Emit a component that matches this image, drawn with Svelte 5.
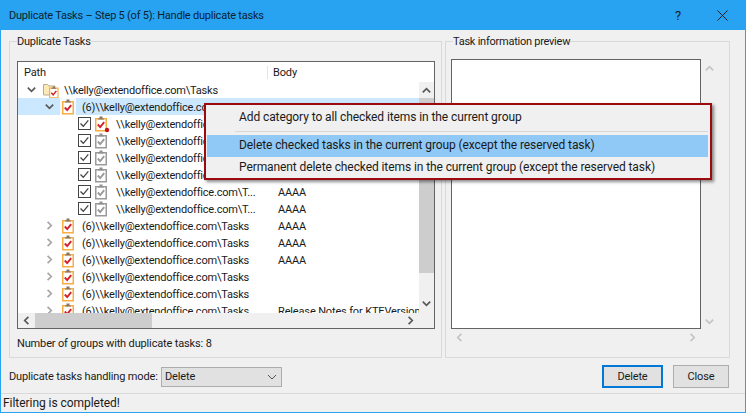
<script>
	const L = '\\\\kelly@extendoffice.com\\Tasks';
	const G = '(6)' + L;
	const C = '\\\\kelly@extendoffice.com\\T...';

	let children = [
		{ text: C, body: '', color: true, dot: true },
		{ text: C, body: '', color: false },
		{ text: C, body: '', color: false },
		{ text: C, body: '', color: false },
		{ text: C, body: 'AAAA', color: false },
		{ text: C, body: 'AAAA', color: false }
	];
	let groups = [
		{ text: G, body: 'AAAA' },
		{ text: G, body: 'AAAA' },
		{ text: G, body: 'AAAA' },
		{ text: G, body: '' },
		{ text: G, body: '' },
		{ text: G, body: 'Release Notes for KTEVersion' }
	];
</script>

{#snippet clip(color)}
	<path d="M0.75 2.75h10.500v12h-10.500z" fill="#fff" stroke={color ? '#f7ae45' : '#9a9a9a'} stroke-width="1.5" />
	<path d="M3 3.500v-1h1.500v-2h3v2h1.500v1z" fill={color ? '#857565' : '#8f8f8f'} />
	<path d="M2.800 8.500l2.400 2.600 4-5" fill="none" stroke={color ? '#d3212a' : '#9a9a9a'} stroke-width="1.9" />
{/snippet}

{#snippet chevDown(color)}
	<svg class="arrow" width="9" height="9" viewBox="0 0 9 9"><path d="M0.800 2.600l3.700 3.700 3.700-3.700" fill="none" stroke={color} stroke-width="1.700" /></svg>
{/snippet}

{#snippet chevRight(color)}
	<svg class="arrow" width="9" height="9" viewBox="0 0 9 9"><path d="M2.600 0.800l3.700 3.700-3.700 3.700" fill="none" stroke={color} stroke-width="1.700" /></svg>
{/snippet}

{#snippet chevUp(color)}
	<svg class="arrow" width="9" height="9" viewBox="0 0 9 9"><path d="M0.800 6.400l3.700-3.700 3.700 3.700" fill="none" stroke={color} stroke-width="1.700" /></svg>
{/snippet}

{#snippet chevLeft(color)}
	<svg class="arrow" width="9" height="9" viewBox="0 0 9 9"><path d="M6.400 0.800l-3.700 3.700 3.700 3.700" fill="none" stroke={color} stroke-width="1.700" /></svg>
{/snippet}

<div class="window">
	<div class="titlebar">
		<span class="title">Duplicate Tasks – Step 5 (of 5): Handle duplicate tasks</span>
		<span class="help">?</span>
		<svg class="close-x" width="11" height="11" viewBox="0 0 11 11"><path d="M0.500 0.500l10 10M10.500 0.500l-10 10" stroke="#1a1a1a" stroke-width="1" fill="none" /></svg>
	</div>

	<div class="content">
		<div class="panels">
			<fieldset class="group left">
				<legend>Duplicate Tasks</legend>
				<div class="tree">
					<div class="tree-main">
						<div class="header">
							<span class="col-path">Path</span>
							<span class="col-body">Body</span>
						</div>
						<div class="rows">
							<div class="row lvl0">
								{@render chevDown('#595959')}
								<svg class="icon" width="16" height="16" viewBox="0 0 16 16">
									<path d="M0.500 2.500h4l1.500 1.500h6v9h-11.500z" fill="#fbeab5" stroke="#b9ad8e" />
									<g transform="translate(6 4) scale(0.8)">{@render clip(true)}</g>
								</svg>
								<span class="txt">{L}</span>
							</div>
							<div class="row lvl1 selected">
								{@render chevDown('#595959')}
								<span class="icon-wrap">
									<svg class="icon" width="12" height="16" viewBox="0 0 12 16">{@render clip(true)}</svg>
								</span>
								<span class="txt">{G}</span>
							</div>
							{#each children as c}
								<div class="row lvl2">
									<span class="check">
										<svg width="11" height="11" viewBox="0 0 11 11"><path d="M1.500 5.500l2.800 2.800 5-6" fill="none" stroke="#444" stroke-width="1.300" /></svg>
									</span>
									<svg class="icon" width="12" height="16" viewBox="0 0 12 16">
										{@render clip(c.color)}
										{#if c.dot}<circle cx="12" cy="14" r="2.200" fill="#c4161c" />{/if}
									</svg>
									<span class="txt">{c.text}</span>
									<span class="body">{c.body}</span>
								</div>
							{/each}
							{#each groups as g}
								<div class="row lvl1">
									{@render chevRight('#a6a6a6')}
									<span class="icon-wrap">
										<svg class="icon" width="12" height="16" viewBox="0 0 12 16">{@render clip(true)}</svg>
									</span>
									<span class="txt">{g.text}</span>
									<span class="body">{g.body}</span>
								</div>
							{/each}
						</div>
						<div class="hbar">
							<span class="btn">{@render chevLeft('#595959')}</span>
							<span class="hthumb"></span>
							<span class="hspace"></span>
							<span class="btn">{@render chevRight('#595959')}</span>
						</div>
					</div>
					<div class="vbar">
						<span class="btn">{@render chevUp('#595959')}</span>
						<span class="vthumb"></span>
						<span class="vspace"></span>
						<span class="btn">{@render chevDown('#595959')}</span>
						<span class="corner"></span>
					</div>
				</div>
				<div class="count">Number of groups with duplicate tasks: 8</div>
			</fieldset>

			<fieldset class="group right">
				<legend>Task information preview</legend>
				<div class="preview-wrap">
					<div class="preview"></div>
					<div class="pv-bar">
						{@render chevUp('#c4c4c4')}
						{@render chevDown('#c4c4c4')}
					</div>
				</div>
				<div class="ph-bar">
					{@render chevLeft('#c4c4c4')}
					{@render chevRight('#c4c4c4')}
				</div>
			</fieldset>
		</div>

		<div class="actions">
			<span class="mode-label">Duplicate tasks handling mode:</span>
			<div class="select">
				<span>Delete</span>
				<svg width="10" height="6" viewBox="0 0 10 6"><path d="M1 1l4 4 4-4" fill="none" stroke="#555" stroke-width="1" /></svg>
			</div>
			<span class="spacer"></span>
			<button class="primary">Delete</button>
			<button>Close</button>
		</div>
	</div>

	<div class="status">Filtering is completed!</div>

	<div class="menu">
		<div class="item">Add category to all checked items in the current group</div>
		<div class="sep"></div>
		<div class="item active">Delete checked tasks in the current group (except the reserved task)</div>
		<div class="item">Permanent delete checked items in the current group (except the reserved task)</div>
	</div>
</div>

<style>
	:global(body) {
		margin: 0;
	}
	.window {
		position: relative;
		width: 746px;
		height: 413px;
		box-sizing: border-box;
		display: flex;
		flex-direction: column;
		background: #f0f0f0;
		border: 1px solid #27a3f2;
		border-top: 0;
		font-family: Roboto, "Noto Sans", sans-serif;
		font-size: 11px;
		letter-spacing: -0.15px;
		color: #1a1a1a;
		overflow: hidden;
	}
	.titlebar {
		height: 30px;
		flex: none;
		margin: 0 -1px;
		padding: 0 18px 0 9px;
		display: flex;
		align-items: center;
		background: #27a3f2;
	}
	.title {
		flex: 1;
		letter-spacing: -0.23px;
		color: #0a2233;
	}
	.help {
		margin-left: 1px;
		margin-right: 36px;
		font-size: 13px;
	}
	.content {
		flex: 1;
		display: flex;
		flex-direction: column;
		padding: 4px 15px 0 8px;
	}
	.panels {
		display: flex;
		gap: 3px;
		height: 324px;
		flex: none;
	}
	.group {
		margin: 0;
		padding: 0 7px;
		border: 1px solid #d9d9d9;
		min-width: 0;
		box-sizing: border-box;
	}
	.group legend {
		padding: 0;
		line-height: 15px;
		letter-spacing: -0.25px;
	}
	.left {
		width: 433px;
	}
	.right {
		flex: 1;
		padding: 0 5px;
	}
	.right legend {
		margin-left: 2px;
	}
	.tree {
		display: flex;
		width: 418px;
		height: 268px;
		box-sizing: border-box;
		margin-top: 12px;
		border: 1px solid #646464;
		background: #fff;
	}
	.tree-main {
		width: 401px;
		flex: none;
		display: flex;
		flex-direction: column;
	}
	.header {
		height: 19px;
		flex: none;
		display: flex;
		align-items: center;
		box-sizing: border-box;
		padding-top: 2px;
	}
	.col-path {
		width: 250px;
		padding-left: 6px;
		box-sizing: border-box;
		border-right: 1px solid #e5e5e5;
	}
	.col-body {
		padding-left: 5px;
	}
	.rows {
		height: 232px;
		flex: none;
		overflow: hidden;
	}
	.row {
		height: 17px;
		display: flex;
		align-items: center;
		white-space: nowrap;
		position: relative;
	}
	.txt,
	.body {
		margin-top: 2px;
	}
	.txt {
		letter-spacing: -0.2px;
	}
	.lvl0 {
		padding-left: 9px;
	}
	.lvl1 {
		padding-left: 27px;
	}
	.lvl2 {
		padding-left: 60px;
	}
	.selected {
		background: #cce8ff;
	}
	.arrow {
		flex: none;
	}
	.lvl0 .icon {
		margin-left: 7px;
		margin-right: 5px;
	}
	.lvl1 .icon-wrap {
		display: flex;
		height: 17px;
		align-items: center;
		padding: 0 2px;
		margin: 0 6px;
	}
	.selected .icon-wrap {
		background: #f4faff;
	}
	.check {
		width: 13px;
		height: 13px;
		flex: none;
		box-sizing: border-box;
		border: 1px solid #444;
		background: #fff;
		display: flex;
		align-items: center;
		justify-content: center;
		margin-right: 4px;
	}
	.lvl2 .icon {
		margin-right: 9px;
		overflow: visible;
	}
	.body {
		position: absolute;
		left: 260px;
	}
	.hbar {
		height: 15px;
		flex: none;
		display: flex;
		align-items: center;
		background: #f0f0f0;
	}
	.hthumb {
		width: 117px;
		height: 15px;
		background: #cdcdcd;
	}
	.hspace {
		flex: 1;
	}
	.btn {
		width: 17px;
		height: 15px;
		flex: none;
		display: flex;
		align-items: center;
		justify-content: center;
	}
	.vbar {
		width: 15px;
		flex: 1;
		background: #f0f0f0;
		display: flex;
		flex-direction: column;
		margin-top: 20px;
	}
	.vbar .btn {
		width: auto;
		height: 16px;
	}
	.vthumb {
		height: 175px;
		background: #cdcdcd;
	}
	.vspace {
		flex: 1;
	}
	.corner {
		height: 17px;
		flex: none;
	}
	.preview-wrap {
		display: flex;
		margin-top: 10px;
	}
	.preview {
		width: 250px;
		height: 270px;
		box-sizing: border-box;
		border: 1px solid #646464;
		background: #fff;
	}
	.pv-bar {
		width: 16px;
		display: flex;
		flex-direction: column;
		justify-content: space-between;
		align-items: center;
		padding: 5px 0 3px;
		box-sizing: border-box;
	}
	.ph-bar {
		width: 250px;
		display: flex;
		justify-content: space-between;
		padding: 4px 4px 0;
		box-sizing: border-box;
	}
	.count {
		margin-top: 7px;
		line-height: 16px;
	}
	.actions {
		display: flex;
		align-items: center;
		height: 23px;
		margin-top: 7px;
	}
	.mode-label {
		width: 152px;
		flex: none;
		white-space: nowrap;
	}
	.select {
		width: 121px;
		height: 20px;
		box-sizing: border-box;
		border: 1px solid #adadad;
		background: #e1e1e1;
		display: flex;
		align-items: center;
		justify-content: space-between;
		padding: 0 4px 0 3px;
	}
	.spacer {
		flex: 1;
	}
	button {
		font: inherit;
		letter-spacing: inherit;
		color: inherit;
		width: 56px;
		height: 23px;
		padding: 0;
		box-sizing: border-box;
		border: 1px solid #adadad;
		background: #e1e1e1;
		margin-left: 10px;
		margin-right: 1px;
	}
	button.primary {
		width: 61px;
		border: 2px solid #0078d7;
		margin-right: 0;
	}
	.status {
		flex: none;
		height: 19px;
		box-sizing: border-box;
		border-top: 1px solid #d9d9d9;
		padding: 1px 0 0 2px;
		line-height: 17px;
		font-size: 12px;
		letter-spacing: -0.05px;
	}
	.menu {
		position: absolute;
		left: 203px;
		top: 103px;
		width: 508px;
		height: 77px;
		box-sizing: border-box;
		border: 2px solid #9b0a0f;
		background: #f0f0f0;
		box-shadow: 2px 2px 3px rgba(0, 0, 0, 0.45);
		padding: 2px 2px 0 1px;
		font-size: 12px;
		letter-spacing: -0.09px;
	}
	.item {
		height: 22px;
		line-height: 20px;
		padding-left: 32px;
		white-space: nowrap;
	}
	.item.active {
		background: #90c8f6;
	}
	.sep {
		height: 1px;
		background: #d7d7d7;
		margin: 2px 0 3px 28px;
	}
</style>
